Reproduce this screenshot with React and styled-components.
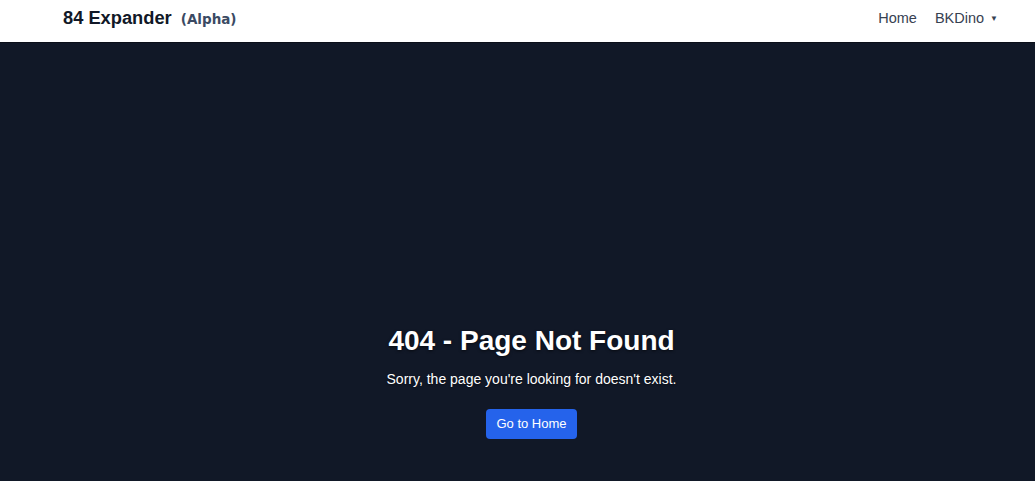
import styled, { createGlobalStyle } from "styled-components";

const GlobalStyle = createGlobalStyle`
    html, body {
        margin: 0;
        padding: 0;
        background: #111827;
        font-family: "Liberation Sans", Arial, sans-serif;
    }
`;

const Page = styled.div`
    min-height: 100vh;
    display: flex;
    flex-direction: column;
    background: #111827;
`;

const Nav = styled.nav`
    background: #ffffff;
    height: 43px;
    box-sizing: border-box;
    border-bottom: 1px solid #0b0f19;
    display: flex;
    justify-content: space-between;
    align-items: center;
    padding: 0 37px 6px 63px;
`;

const Brand = styled.div`
    display: flex;
    align-items: baseline;
    gap: 9px;
`;

const Title = styled.span`
    font-size: 18.3px;
    font-weight: 700;
    color: #111827;
`;

const Tag = styled.span`
    font-family: "DejaVu Sans", Verdana, sans-serif;
    font-size: 13.5px;
    font-weight: 700;
    color: #3b4a63;
`;

const Menu = styled.div`
    display: flex;
    align-items: center;
    gap: 18px;
`;

const MenuItem = styled.a`
    font-size: 14.5px;
    color: #374151;
    text-decoration: none;
    display: flex;
    align-items: center;
    gap: 6px;
`;

const Caret = styled.span`
    font-size: 8px;
    color: #374151;
`;

const Main = styled.main`
    flex: 1;
    display: flex;
    flex-direction: column;
    align-items: center;
    padding: 281px 0 0 28px;
    color: #ffffff;
    text-align: center;
`;

const Heading = styled.h1`
    margin: 0 0 11px;
    font-size: 28px;
    line-height: 34px;
    font-weight: 700;
    text-shadow: 0 1px 3px rgba(0, 0, 0, 0.6);
`;

const Message = styled.p`
    margin: 0 0 20px;
    font-size: 14px;
    line-height: 20px;
    color: #ffffff;
    text-shadow: 0 1px 2px rgba(0, 0, 0, 0.5);
`;

const HomeButton = styled.a`
    background: #2563eb;
    color: #ffffff;
    font-size: 13px;
    line-height: 20px;
    padding: 5px 10px;
    border-radius: 4px;
    text-decoration: none;
`;

const App = () => {
    return (
        <>
            <GlobalStyle />
            <Page>
                <Nav>
                    <Brand>
                        <Title>84 Expander</Title>
                        <Tag>(Alpha)</Tag>
                    </Brand>
                    <Menu>
                        <MenuItem href="#">Home</MenuItem>
                        <MenuItem href="#">
                            BKDino <Caret>▼</Caret>
                        </MenuItem>
                    </Menu>
                </Nav>
                <Main>
                    <Heading>404 - Page Not Found</Heading>
                    <Message>Sorry, the page you're looking for doesn't exist.</Message>
                    <HomeButton href="#">Go to Home</HomeButton>
                </Main>
            </Page>
        </>
    );
};

export default App;
